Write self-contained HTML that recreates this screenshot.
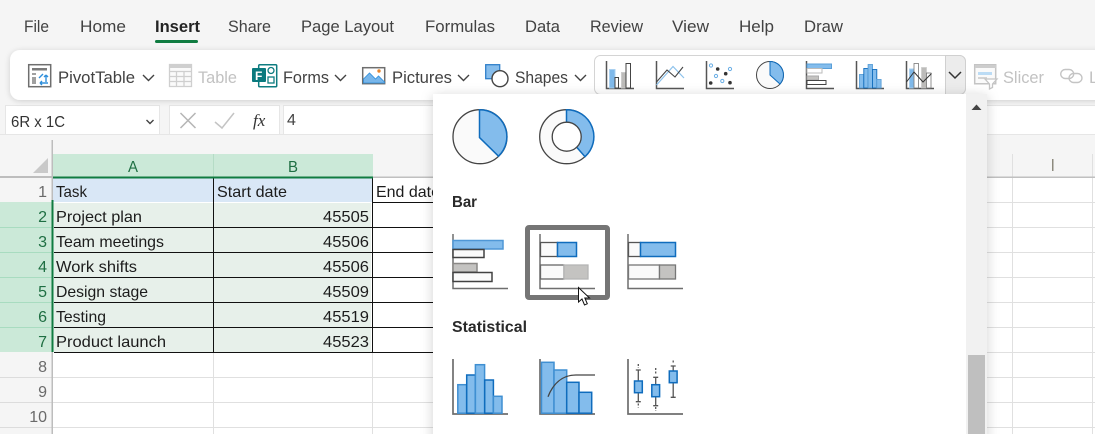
<!DOCTYPE html>
<html><head><meta charset="utf-8"><style>
html,body{margin:0;padding:0;width:1095px;height:434px;overflow:hidden;background:#f5f5f5}
svg{display:block}
text{font-family:"Liberation Sans",sans-serif}
.t{font-size:17px;fill:#424242}
.c{font-size:16px;fill:#1c1c1c}
.d{font-size:17px;fill:#c2c2c2}
.h{font-size:16px;fill:#1f6f43;text-anchor:middle}
.r{font-size:16px;fill:#6a6a6a;text-anchor:end}
.g{fill:#1f6f43}
.b{fill:#83bcec;stroke:#0f6cbd;stroke-width:1.5}
.b2{fill:#83bcec;stroke:#4f97d6;stroke-width:1.5}
.w{fill:#fafafa;stroke:#424242;stroke-width:1.5}
.y{fill:#c4c3c1;stroke:#8a8886;stroke-width:1.5}
.a{stroke:#6e6e6e;stroke-width:1.5;fill:none}
.ch{fill:none;stroke:#424242;stroke-width:1.4}
</style></head><body>
<svg width="1095" height="434" viewBox="0 0 1095 434" xmlns="http://www.w3.org/2000/svg">
<defs>
<filter id="s" x="-10%" y="-30%" width="120%" height="160%"><feDropShadow dx="0" dy="1" stdDeviation="3" flood-color="#000" flood-opacity=".16"/></filter>
<filter id="s2" x="-5%" y="-5%" width="110%" height="110%"><feDropShadow dx="0" dy="2" stdDeviation="6" flood-color="#000" flood-opacity=".18"/></filter>
</defs>
<rect width="1095" height="434" fill="#f5f5f5"/>

<!-- tabs -->
<text x="24" y="32" class="t" textLength="25" lengthAdjust="spacingAndGlyphs">File</text>
<text x="80" y="32" class="t" textLength="46" lengthAdjust="spacingAndGlyphs">Home</text>
<text x="155" y="32" class="t" style="font-weight:700;fill:#242424" textLength="45" lengthAdjust="spacingAndGlyphs">Insert</text>
<rect x="155" y="40" width="43" height="3" rx="1.5" fill="#107c41"/>
<text x="228" y="32" class="t" textLength="43" lengthAdjust="spacingAndGlyphs">Share</text>
<text x="301" y="32" class="t" textLength="93" lengthAdjust="spacingAndGlyphs">Page Layout</text>
<text x="425" y="32" class="t" textLength="70" lengthAdjust="spacingAndGlyphs">Formulas</text>
<text x="525" y="32" class="t" textLength="35" lengthAdjust="spacingAndGlyphs">Data</text>
<text x="590" y="32" class="t" textLength="53" lengthAdjust="spacingAndGlyphs">Review</text>
<text x="672" y="32" class="t" textLength="37" lengthAdjust="spacingAndGlyphs">View</text>
<text x="739" y="32" class="t" textLength="35" lengthAdjust="spacingAndGlyphs">Help</text>
<text x="804" y="32" class="t" textLength="39" lengthAdjust="spacingAndGlyphs">Draw</text>

<!-- formula row -->
<rect x="283.500" y="105.500" width="830" height="29" fill="#fff" stroke="#e6e6e6"/>
<rect x="5.500" y="105.500" width="154" height="29" fill="#fff" stroke="#e6e6e6"/>
<rect x="169.500" y="105.500" width="110" height="29" fill="#fff" stroke="#e6e6e6"/>
<text x="11" y="127" class="c" textLength="54" lengthAdjust="spacingAndGlyphs" style="fill:#333">6R x 1C</text>
<path d="M146.500 120l3.500 3.500 3.500-3.500" class="ch"/>
<path d="M180.500 113l15 15M195.500 113l-15 15" fill="none" stroke="#b5b5b5" stroke-width="1.5"/>
<path d="M215 122l7 6 12-15" fill="none" stroke="#c4c4c4" stroke-width="1.5"/>
<text x="253" y="126" style="font-family:'Liberation Serif',serif;font-style:italic;font-size:17px;fill:#333">fx</text>
<text x="287" y="125" class="c" style="fill:#444">4</text>

<!-- ribbon -->
<rect x="10" y="50" width="1120" height="50" rx="10" fill="#fff" filter="url(#s)"/>

<!-- Pivot icon -->
<rect x="28.700" y="64.700" width="22" height="22" fill="#fff" stroke="#6e6e6e" stroke-width="1.5"/>
<rect x="32" y="68" width="15" height="2.500" fill="#7a7a7a"/>
<rect x="32" y="73" width="4" height="2" fill="#a0a0a0"/><rect x="32" y="77" width="4" height="7" fill="#a0a0a0"/>
<path d="M40 83h8M40 83l2-2M40 83l2 2M46 75v7M46 75l-2 2M46 75l2 2M39 78l4-4" fill="none" stroke="#2f8fdb" stroke-width="1.4"/>
<text x="58" y="83" class="t" textLength="77" lengthAdjust="spacingAndGlyphs">PivotTable</text>
<path d="M143 75l5.500 5.500 5.500-5.500" class="ch"/>

<!-- Table -->
<path d="M169.500 64.500h22v22h-22zM169.500 71.500h22M169.500 76.500h22M169.500 81.500h22M176.500 71.500v15M184 71.500v15" fill="#fafafa" stroke="#cfcfcf" stroke-width="1.300"/>
<rect x="169" y="64" width="23" height="4" fill="#cfcfcf"/>
<text x="198" y="83" class="d" textLength="39" lengthAdjust="spacingAndGlyphs">Table</text>

<!-- Forms -->
<rect x="258.700" y="64.700" width="18" height="22" rx="1" fill="#fff" stroke="#0e7c80" stroke-width="1.500"/>
<circle cx="271" cy="70.500" r="3" fill="#fff" stroke="#0e7c80" stroke-width="1.300"/>
<rect x="268" y="77" width="6" height="6" fill="#fff" stroke="#0e7c80" stroke-width="1.300"/>
<rect x="252" y="68" width="14" height="14" rx="1" fill="#0a7a7e"/>
<text x="255" y="80" style="font-size:12px;font-weight:700;fill:#fff">F</text>
<text x="283" y="83" class="t" textLength="46" lengthAdjust="spacingAndGlyphs">Forms</text>
<path d="M335 75l5.500 5.500 5.500-5.500" class="ch"/>

<!-- Pictures -->
<rect x="362.700" y="67.700" width="22" height="16" fill="#fff" stroke="#6e6e6e" stroke-width="1.500"/>
<path d="M363.500 79l6-6 6 6 3-3 6 6v1h-21z" fill="#78b6ea" stroke="#2f8fdb" stroke-width=".8"/>
<circle cx="379" cy="71" r="1.700" fill="#e8862e"/>
<text x="392" y="83" class="t" textLength="60" lengthAdjust="spacingAndGlyphs">Pictures</text>
<path d="M458 75l5.500 5.500 5.500-5.500" class="ch"/>

<!-- Shapes -->
<rect x="485.700" y="64.700" width="14" height="14" fill="#86bdec" stroke="#2f7fca" stroke-width="1.300"/>
<circle cx="500" cy="78.700" r="8" fill="#fff" stroke="#444" stroke-width="1.400"/>
<text x="515" y="83" class="t" textLength="53" lengthAdjust="spacingAndGlyphs">Shapes</text>
<path d="M575 75l5.500 5.500 5.500-5.500" class="ch"/>

<!-- gallery -->
<rect x="594.500" y="55.500" width="371" height="39" rx="6" fill="#fff" stroke="#d4d4d4"/>
<path d="M945.500 55.500h14a6 6 0 0 1 6 6v27a6 6 0 0 1-6 6h-14z" fill="#ececec" stroke="#d0d0d0"/>
<path d="M949 72l6 6 6-6" fill="none" stroke="#333" stroke-width="1.500"/>

<!-- i1 column -->
<g stroke-width="1">
<path d="M606.500 61v27.500H634" class="a" style="stroke:#555"/>
<rect x="609.500" y="69.500" width="5.500" height="18.500" fill="#7fb9ea" stroke="#a9d0f0"/>
<rect x="615" y="77.500" width="3.500" height="10.500" fill="#fff" stroke="#444"/>
<rect x="621.500" y="72.500" width="4.500" height="15.500" fill="#bdbcba" stroke="#ccc"/>
<rect x="626" y="63.500" width="4.500" height="24.500" fill="#fff" stroke="#444"/>
</g>
<!-- i2 line -->
<path d="M656.500 61v27.500H684" class="a" style="stroke:#555"/>
<path d="M656.500 85L673 66.500 684 78" fill="none" stroke="#8cc2ec" stroke-width="1.200"/>
<path d="M656.500 82L667 70l8 7 8-10" fill="none" stroke="#444" stroke-width="1.100"/>
<!-- i3 scatter -->
<path d="M706.500 61v27.500H734" class="a" style="stroke:#555"/>
<g fill="#fff" stroke="#6aaee5"><circle cx="711" cy="65.500" r="1.600"/><circle cx="730" cy="69" r="1.600"/><circle cx="716" cy="76" r="1.600"/><circle cx="722.300" cy="81" r="1.600"/></g>
<g fill="#333"><circle cx="717.700" cy="69" r="1.800"/><circle cx="725.700" cy="73.700" r="1.800"/><circle cx="710.700" cy="83" r="1.800"/><circle cx="730" cy="82.700" r="1.800"/></g>
<!-- i4 pie -->
<circle cx="770" cy="75" r="13.500" fill="#fafafa" stroke="#444" stroke-width="1"/>
<path d="M770 61.500a13.500 13.500 0 0 1 10 22.500L770 75z" fill="#83bcec" stroke="#0f6cbd" stroke-width="1"/>
<!-- i5 bar -->
<g stroke-width="1">
<path d="M806.500 61v27.500H834" class="a" style="stroke:#555"/>
<rect x="807" y="64" width="24.500" height="4.500" fill="#83bcec" stroke="#5a9fd8"/>
<rect x="807" y="68.500" width="15" height="4.500" fill="#fff" stroke="#bbb"/>
<rect x="807" y="76" width="11.500" height="4" fill="#c4c3c1" stroke="#aaa"/>
<rect x="807" y="80.500" width="19" height="4" fill="#fff" stroke="#444"/>
</g>
<!-- i6 hist -->
<path d="M856.500 61v27.500H884" class="a" style="stroke:#555"/>
<g fill="#83bcec" stroke="#0f6cbd" stroke-width=".9">
<rect x="859.500" y="74.500" width="4.300" height="13.500" stroke="#5a9fd8"/>
<rect x="863.800" y="68.500" width="4.300" height="19.500"/>
<rect x="868.100" y="64.500" width="4.400" height="23.500" stroke="#5a9fd8"/>
<rect x="872.500" y="69.500" width="4.300" height="18.500"/>
<rect x="876.800" y="79.500" width="4.300" height="8.500" stroke="#5a9fd8"/>
</g>
<!-- i7 combo -->
<path d="M906.500 61v27.500H934" class="a" style="stroke:#555"/>
<rect x="909.500" y="69" width="4.500" height="19" fill="#7fb9ea" stroke="#a9d0f0"/>
<rect x="914" y="63.500" width="4.500" height="24.500" fill="#fff" stroke="#777" stroke-width=".8"/>
<rect x="921.500" y="67.500" width="5" height="20.500" fill="#bdbcba" stroke="#ccc" stroke-width=".8"/>
<rect x="926.500" y="73" width="4.500" height="15" fill="#fff" stroke="#777" stroke-width=".8"/>
<path d="M906.500 82l7.500-10 9 10 8.500-8.500" fill="none" stroke="#333" stroke-width="1"/>

<!-- Slicer / Link -->
<path d="M974.700 64.700h21v19h-21z" fill="#fafafa" stroke="#c4c4c4" stroke-width="1.500"/>
<rect x="975" y="65" width="21" height="3" fill="#cdcdcd"/>
<rect x="978" y="72" width="14" height="3" fill="#bcdcf5"/>
<rect x="978" y="77" width="9" height="2" fill="#d4d4d4"/>
<path d="M985 79h12l-4.500 5v3.500l-3 1.500v-5z" fill="#fff" stroke="#c4c4c4" stroke-width="1.300"/>
<text x="1003" y="83" class="d" textLength="41" lengthAdjust="spacingAndGlyphs">Slicer</text>
<rect x="1060.700" y="69.500" width="13" height="9" rx="4.500" fill="none" stroke="#c4c4c4" stroke-width="1.400"/>
<rect x="1069" y="73.500" width="13" height="9" rx="4.500" fill="none" stroke="#c4c4c4" stroke-width="1.400"/>
<text x="1089" y="83" class="d">L</text>

<!-- sheet -->
<rect x="53" y="177" width="1042" height="257" fill="#fff"/>
<rect x="0" y="154" width="1095" height="23" fill="#f5f5f5"/>
<rect x="0" y="134" width="1095" height="1" fill="#e6e6e6"/>
<rect x="53" y="154" width="320" height="23" fill="#cbe9d8"/>
<rect x="213" y="154" width="1" height="23" fill="#b5dcc6"/>
<rect x="0" y="202" width="52" height="150" fill="#cbe9d8"/>
<g fill="#a8dcc0"><rect x="0" y="227" width="52" height="1"/><rect x="0" y="252" width="52" height="1"/><rect x="0" y="277" width="52" height="1"/><rect x="0" y="302" width="52" height="1"/><rect x="0" y="327" width="52" height="1"/></g>
<g fill="#dcdcdc"><rect x="0" y="377" width="52" height="1"/><rect x="0" y="402" width="52" height="1"/><rect x="0" y="427" width="52" height="1"/></g>
<rect x="51.500" y="140" width="1.500" height="294" fill="#bdbdbd"/>
<rect x="0" y="176" width="52" height="2" fill="#bdbdbd"/>
<path d="M48 158v15H33z" fill="#c9c9c9"/>
<!-- grid lines -->
<g fill="#e0e0e0">
<rect x="53" y="377" width="1042" height="1"/><rect x="53" y="402" width="1042" height="1"/><rect x="53" y="427" width="1042" height="1"/>
<rect x="213" y="352" width="1" height="82"/><rect x="372" y="352" width="1" height="82"/>
<rect x="987" y="202" width="108" height="1"/><rect x="987" y="227" width="108" height="1"/><rect x="987" y="252" width="108" height="1"/><rect x="987" y="277" width="108" height="1"/><rect x="987" y="302" width="108" height="1"/><rect x="987" y="327" width="108" height="1"/><rect x="987" y="352" width="108" height="1"/>
<rect x="1012" y="154" width="1" height="280"/><rect x="1092" y="154" width="1" height="280"/>
</g>
<rect x="373" y="176.500" width="722" height="1.500" fill="#c0c0c0"/>
<!-- fills -->
<rect x="53" y="177" width="320" height="25" fill="#d9e7f6"/>
<rect x="53" y="202" width="320" height="150" fill="#e7f0ea"/>
<!-- borders -->
<rect x="53" y="202" width="319" height="1" fill="#fff"/>
<rect x="371" y="203" width="1" height="148" fill="#fff"/>
<g fill="#111">
<rect x="54" y="227" width="380" height="1"/><rect x="54" y="252" width="380" height="1"/><rect x="54" y="277" width="380" height="1"/><rect x="54" y="302" width="380" height="1"/><rect x="54" y="327" width="380" height="1"/><rect x="54" y="352" width="380" height="1"/>
<rect x="372" y="202" width="62" height="1"/>
<rect x="213" y="177" width="1" height="175"/><rect x="372" y="177" width="1" height="175"/>
</g>
<rect x="53" y="176.500" width="320" height="2" fill="#107c41"/>
<rect x="51.500" y="200" width="2" height="152" fill="#107c41"/>

<!-- headers -->
<text x="133" y="172" class="h" textLength="10" lengthAdjust="spacingAndGlyphs">A</text>
<text x="293" y="172" class="h" textLength="10" lengthAdjust="spacingAndGlyphs">B</text>
<rect x="1052" y="159" width="1.500" height="12" fill="#8d8a7e"/>
<text x="47" y="197" class="r">1</text>
<text x="47" y="222" class="r" style="fill:#1f6f43">2</text>
<text x="47" y="247" class="r" style="fill:#1f6f43">3</text>
<text x="47" y="272" class="r" style="fill:#1f6f43">4</text>
<text x="47" y="297" class="r" style="fill:#1f6f43">5</text>
<text x="47" y="322" class="r" style="fill:#1f6f43">6</text>
<text x="47" y="347" class="r" style="fill:#1f6f43">7</text>
<text x="47" y="372" class="r">8</text>
<text x="47" y="397" class="r">9</text>
<text x="47" y="422" class="r">10</text>

<!-- cells -->
<text x="56" y="197" class="c" textLength="31" lengthAdjust="spacingAndGlyphs">Task</text>
<text x="217" y="197" class="c" textLength="70" lengthAdjust="spacingAndGlyphs">Start date</text>
<text x="376" y="197" class="c" textLength="64" lengthAdjust="spacingAndGlyphs">End date</text>
<text x="56" y="222" class="c" textLength="86" lengthAdjust="spacingAndGlyphs">Project plan</text>
<text x="56" y="247" class="c" textLength="108" lengthAdjust="spacingAndGlyphs">Team meetings</text>
<text x="56" y="272" class="c" textLength="81" lengthAdjust="spacingAndGlyphs">Work shifts</text>
<text x="56" y="297" class="c" textLength="92" lengthAdjust="spacingAndGlyphs">Design stage</text>
<text x="56" y="322" class="c" textLength="50" lengthAdjust="spacingAndGlyphs">Testing</text>
<text x="56" y="347" class="c" textLength="110" lengthAdjust="spacingAndGlyphs">Product launch</text>
<text x="323" y="222" class="c" textLength="46" lengthAdjust="spacingAndGlyphs">45505</text>
<text x="323" y="247" class="c" textLength="46" lengthAdjust="spacingAndGlyphs">45506</text>
<text x="323" y="272" class="c" textLength="46" lengthAdjust="spacingAndGlyphs">45506</text>
<text x="323" y="297" class="c" textLength="46" lengthAdjust="spacingAndGlyphs">45509</text>
<text x="323" y="322" class="c" textLength="46" lengthAdjust="spacingAndGlyphs">45519</text>
<text x="323" y="347" class="c" textLength="46" lengthAdjust="spacingAndGlyphs">45523</text>

<!-- dropdown -->
<rect x="433" y="94" width="554" height="360" fill="#fff" filter="url(#s2)"/>
<rect x="966" y="94" width="21" height="340" fill="#f1f1f1"/>
<path d="M971.500 110l5-5.500 5 5.500z" fill="#444"/>
<rect x="968" y="355" width="17" height="79" fill="#bfbfbf"/>

<!-- pies -->
<circle cx="480" cy="136.700" r="27" fill="#fafafa" stroke="#444" stroke-width="1.300"/>
<path d="M479.500 109.700a27 27 0 0 1 19 46.500L479.500 137.500z" fill="#83bcec" stroke="#0f6cbd" stroke-width="1.500"/>
<circle cx="566.700" cy="136.700" r="27" fill="#fafafa" stroke="#444" stroke-width="1.300"/>
<path d="M566.500 109.700a27 27 0 0 1 18.500 47L576.500 147a14.500 14.500 0 0 0-10-24.800z" fill="#83bcec" stroke="#0f6cbd" stroke-width="1.500"/>
<circle cx="566.700" cy="136.700" r="14.500" fill="#fff" stroke="#444" stroke-width="1.300"/>

<text x="452" y="207" style="font-size:16px;font-weight:700;fill:#2a2a2a" textLength="25" lengthAdjust="spacingAndGlyphs">Bar</text>
<text x="452" y="332" style="font-size:16px;font-weight:700;fill:#2a2a2a" textLength="75" lengthAdjust="spacingAndGlyphs">Statistical</text>

<!-- bar A -->
<path d="M453 234v54.500h55" class="a"/>
<rect x="453" y="240.500" width="50" height="8.500" class="b2"/>
<rect x="453" y="249.500" width="31" height="8" class="w"/>
<rect x="453" y="263.500" width="24" height="8.500" class="y"/>
<rect x="453" y="272.500" width="39" height="9" class="w"/>

<!-- selected -->
<rect x="527.500" y="227.500" width="80" height="70" rx="1.500" fill="#fff" stroke="#757575" stroke-width="5"/>
<path d="M540 234v54.500h55" class="a"/>
<rect x="540.500" y="242.500" width="17" height="14" fill="#fafafa" stroke="#555" stroke-width="1.300"/>
<rect x="557.500" y="242.500" width="19" height="14" class="b"/>
<rect x="540.500" y="265" width="23.500" height="14" fill="#fafafa" stroke="#666" stroke-width="1.300"/>
<rect x="564" y="265" width="24" height="14" fill="#c4c3c1" stroke="#b5b5b5" stroke-width="1.300"/>

<!-- bar C -->
<path d="M628 234v54.500h55" class="a"/>
<rect x="628.500" y="242.500" width="12" height="14" fill="#fafafa" stroke="#555" stroke-width="1.300"/>
<rect x="640.500" y="242.500" width="35" height="14" class="b"/>
<rect x="628.500" y="265" width="31" height="14" fill="#fafafa" stroke="#777" stroke-width="1.300"/>
<rect x="659.500" y="265" width="16" height="14" fill="#c4c3c1" stroke="#777" stroke-width="1.300"/>

<!-- cursor -->
<path d="M578.500 287.500v14.500l3.500-3 2.500 6 2.800-1.200-2.500-5.800h4.700z" fill="#fff" stroke="#111" stroke-width="1"/>

<!-- hist -->
<path d="M453 359v55h55" class="a" style="stroke-width:1.700"/>
<g fill="#83bcec" stroke-width="1.500">
<rect x="457.800" y="384.700" width="8.800" height="28.500" stroke="#3f8fd2"/>
<rect x="466.700" y="375" width="8.700" height="38.200" stroke="#0f6cbd"/>
<rect x="475.400" y="364.700" width="9.200" height="48.500" stroke="#3f8fd2"/>
<rect x="484.700" y="380" width="8.700" height="33.200" stroke="#0f6cbd"/>
<rect x="493.400" y="396.300" width="8.600" height="16.900" stroke="#3f8fd2"/>
</g>
<!-- pareto -->
<path d="M540 359v55h55" class="a" style="stroke-width:1.700"/>
<g fill="#83bcec" stroke-width="1.500">
<rect x="541.500" y="362.300" width="12.500" height="50.900" stroke="#3f8fd2"/>
<rect x="554" y="370" width="12.700" height="43.200" stroke="#3f8fd2"/>
<rect x="566.700" y="382.300" width="12.300" height="30.900" stroke="#0f6cbd"/>
<rect x="579" y="392.300" width="12.700" height="20.900" stroke="#0f6cbd"/>
</g>
<path d="M548 396.700C553 384 562 375 576 375H595" fill="none" stroke="#444" stroke-width="1.300"/>
<!-- box -->
<path d="M628 359v55h55" class="a" style="stroke-width:1.700"/>
<g stroke="#555" stroke-width="1.300" fill="none">
<path d="M638.300 370v31.700M635.800 370h5M635.800 401.700h5"/>
<path d="M655.700 377.300v28.400M653.200 377.300h5M653.200 405.700h5"/>
<path d="M673.200 366v31.300M670.700 366h5M670.700 397.300h5"/>
<path d="M638.300 364v4M638.300 403.500v4M655.700 368v7M655.700 407v4M673.200 360.500v3.500" stroke-dasharray="2 1.500"/>
</g>
<rect x="634.500" y="381" width="7.800" height="11.700" class="b"/>
<rect x="651.800" y="384.700" width="7.800" height="12" class="b"/>
<rect x="669.300" y="371" width="7.800" height="11.700" class="b"/>
</svg>
</body></html>
